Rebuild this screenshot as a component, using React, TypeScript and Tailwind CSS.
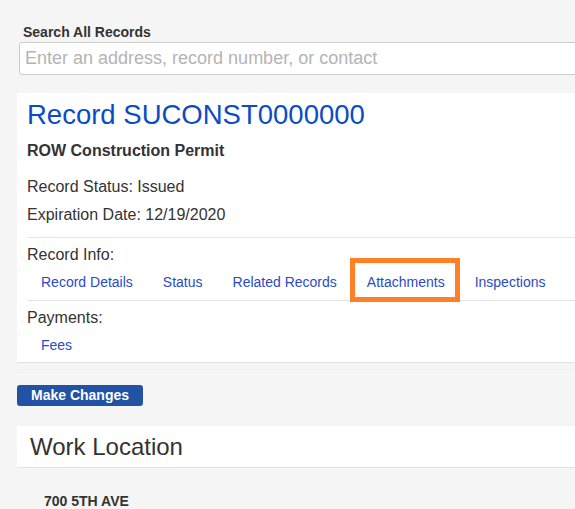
const links = ['Record Details', 'Status', 'Related Records', 'Attachments', 'Inspections'];

export default function App() {
  return (
    <div className="min-h-screen w-full overflow-hidden bg-[#f5f5f5] font-['Liberation_Sans',Arial,sans-serif] text-[#333]">
      <div className="w-[700px] pl-[17px] pt-[22px]">
        <label className="block pl-[6px] text-[14px] font-bold leading-[20px] text-[#333]">
          Search All Records
        </label>
        <input
          className="ml-[2px] block h-[33px] w-[680px] rounded-[3px] border border-[#ccc] bg-white pl-[5px] text-[18px] text-[#333] outline-none placeholder:text-[#b4b4b4]"
          placeholder="Enter an address, record number, or contact"
        />

        <div className="mt-[18px] border-b border-[#e2e2e2] bg-white pb-[7px] pl-[10px] pt-[5px]">
          <h1 className="text-[27.5px] leading-[33px] text-[#0b4cc4]">
            <span>Record</span> <span>SUCONST0000000</span>
          </h1>
          <div className="mt-[6px] text-[16px] font-bold leading-[28px]">ROW Construction Permit</div>
          <div className="mt-[8px] text-[16px] leading-[28px]">Record Status: Issued</div>
          <div className="text-[16px] leading-[28px]">Expiration Date: 12/19/2020</div>

          <div className="mt-[8px] h-px bg-[#e4e4e4]" />

          <div className="mt-[6px] text-[16px] leading-[22px]">Record Info:</div>
          <div className="mt-[6px] flex gap-[30px] pl-[14px] text-[14px] leading-[20px] text-[#2a4bc5]">
            {links.map(link => (
              <a key={link} className="relative cursor-pointer">
                {link}
                {link === 'Attachments' && (
                  <span className="absolute bottom-[-10px] left-[-17px] right-[-15px] top-[-14px] border-[5px] border-[#ff8125]" />
                )}
              </a>
            ))}
          </div>

          <div className="mt-[8px] h-px bg-[#e4e4e4]" />

          <div className="mt-[6px] text-[16px] leading-[22px]">Payments:</div>
          <div className="mt-[6px] pl-[14px] text-[14px] leading-[20px] text-[#2a4bc5]">
            <a className="cursor-pointer">Fees</a>
          </div>
        </div>

        <div className="mt-[11px] border-t border-[#fbfbfb] pt-[10px]">
          <button className="block h-[21px] rounded-[3px] bg-[#2152a3] px-[14px] text-[14px] font-bold leading-[21px] text-white">
            Make Changes
          </button>

          <div className="mt-[20px] h-[42px] border-b border-[#e2e2e2] bg-white pl-[13px] text-[24px] leading-[41px] text-[#333]">
            Work Location
          </div>

          <div className="mt-[23px] pl-[27px] text-[14px] font-bold leading-[20px]">700 5TH AVE</div>
        </div>
      </div>
    </div>
  );
}
